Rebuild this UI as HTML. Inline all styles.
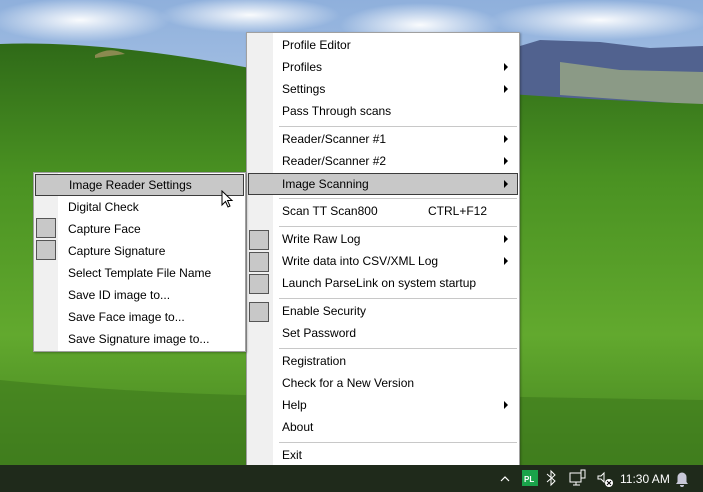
<!DOCTYPE html>
<html><head><meta charset="utf-8"><style>
*{margin:0;padding:0;box-sizing:border-box}
body{width:703px;height:492px;overflow:hidden;position:relative;font-family:"Liberation Sans",sans-serif;font-size:12px;color:#000}
.bg{position:absolute;left:0;top:0}
.menu{position:absolute;background:#fff;border:1px solid #a0a0a0;box-shadow:1px 1px 2px rgba(0,0,0,.3)}
.gut{position:absolute;left:0;top:0;bottom:0;background:#f0f0f0}
.it{position:absolute;left:0;right:0;height:22px;line-height:22px;white-space:nowrap}
.hl{background:#c8c8c8;border:1px solid #3c3c3c}
.arr{position:absolute;width:0;height:0;border-left:4px solid #000;border-top:4px solid transparent;border-bottom:4px solid transparent}
.sep{position:absolute;height:1px;background:#c8c8c8}
.cb{position:absolute;width:20px;height:20px;background:#c8c8c8;border:1px solid #555}
.tb{position:absolute;left:0;top:465px;width:703px;height:27px;background:#1f2a1b}
</style></head><body>
<svg class="bg" width="703" height="492" viewBox="0 0 703 492">
<defs>
<linearGradient id="sky" x1="0" y1="0" x2="0" y2="1"><stop offset="0" stop-color="#8fb0dc"/><stop offset=".5" stop-color="#c5d8ef"/><stop offset="1" stop-color="#e6eef8"/></linearGradient>
<linearGradient id="fld" x1="0" y1="0" x2="0" y2="1"><stop offset="0" stop-color="#2f6a18"/><stop offset=".3" stop-color="#4a9222"/><stop offset=".65" stop-color="#62a92e"/><stop offset="1" stop-color="#3d7a1c"/></linearGradient>
<radialGradient id="cl"><stop offset="0" stop-color="#fff" stop-opacity=".95"/><stop offset="1" stop-color="#fff" stop-opacity="0"/></radialGradient>
</defs>
<rect width="703" height="492" fill="url(#sky)"/>
<ellipse cx="80" cy="20" rx="90" ry="22" fill="url(#cl)"/>
<ellipse cx="250" cy="15" rx="90" ry="18" fill="url(#cl)"/>
<ellipse cx="420" cy="25" rx="80" ry="22" fill="url(#cl)"/>
<ellipse cx="600" cy="20" rx="110" ry="20" fill="url(#cl)"/>
<path d="M500 52 L540 40 L600 42 L650 48 L703 46 L703 112 L500 100Z" fill="#51628f"/>
<path d="M560 62 L620 70 L703 72 L703 105 L560 95Z" fill="#8b9a86"/>
<path d="M0 44 Q100 40 250 68 Q450 95 703 104 L703 492 L0 492Z" fill="url(#fld)"/>
<path d="M0 380 Q200 400 400 395 L703 400 L703 492 L0 492Z" fill="#3e7a1d" opacity=".6"/>
<path d="M95 55 Q110 46 125 54 L95 58Z" fill="#8a8a50"/>
</svg>

<div class="menu" style="left:246px;top:32px;width:274px;height:436px">
<div class="gut" style="width:26px"></div>
<div class="it" style="top:1px"><span style="margin-left:35px">Profile Editor</span></div>
<div class="it" style="top:23px"><span style="margin-left:35px">Profiles</span><i class="arr" style="left:257px;top:7px"></i></div>
<div class="it" style="top:45px"><span style="margin-left:35px">Settings</span><i class="arr" style="left:257px;top:7px"></i></div>
<div class="it" style="top:67px"><span style="margin-left:35px">Pass Through scans</span></div>
<div class="sep" style="left:32px;right:2px;top:93px"></div>
<div class="it" style="top:95px"><span style="margin-left:35px">Reader/Scanner #1</span><i class="arr" style="left:257px;top:7px"></i></div>
<div class="it" style="top:117px"><span style="margin-left:35px">Reader/Scanner #2</span><i class="arr" style="left:257px;top:7px"></i></div>
<div class="it hl" style="top:140px;left:1px;right:1px;height:22px;line-height:20px"><span style="margin-left:33px">Image Scanning</span><i class="arr" style="left:255px;top:6px"></i></div>
<div class="sep" style="left:32px;right:2px;top:165px"></div>
<div class="it" style="top:167px"><span style="margin-left:35px">Scan TT Scan800</span><span style="position:absolute;left:181px">CTRL+F12</span></div>
<div class="sep" style="left:32px;right:2px;top:193px"></div>
<div class="cb" style="left:2px;top:197px"></div>
<div class="cb" style="left:2px;top:219px"></div>
<div class="cb" style="left:2px;top:241px"></div>
<div class="it" style="top:195px"><span style="margin-left:35px">Write Raw Log</span><i class="arr" style="left:257px;top:7px"></i></div>
<div class="it" style="top:217px"><span style="margin-left:35px">Write data into CSV/XML Log</span><i class="arr" style="left:257px;top:7px"></i></div>
<div class="it" style="top:239px"><span style="margin-left:35px">Launch ParseLink on system startup</span></div>
<div class="sep" style="left:32px;right:2px;top:265px"></div>
<div class="cb" style="left:2px;top:269px"></div>
<div class="it" style="top:267px"><span style="margin-left:35px">Enable Security</span></div>
<div class="it" style="top:289px"><span style="margin-left:35px">Set Password</span></div>
<div class="sep" style="left:32px;right:2px;top:315px"></div>
<div class="it" style="top:317px"><span style="margin-left:35px">Registration</span></div>
<div class="it" style="top:339px"><span style="margin-left:35px">Check for a New Version</span></div>
<div class="it" style="top:361px"><span style="margin-left:35px">Help</span><i class="arr" style="left:257px;top:7px"></i></div>
<div class="it" style="top:383px"><span style="margin-left:35px">About</span></div>
<div class="sep" style="left:32px;right:2px;top:409px"></div>
<div class="it" style="top:411px"><span style="margin-left:35px">Exit</span></div>
</div>

<div class="menu" style="left:33px;top:172px;width:213px;height:180px">
<div class="gut" style="width:24px"></div>
<div class="it hl" style="top:1px;left:1px;right:1px;height:22px;line-height:20px"><span style="margin-left:33px">Image Reader Settings</span></div>
<div class="cb" style="left:2px;top:45px"></div>
<div class="cb" style="left:2px;top:67px"></div>
<div class="it" style="top:23px"><span style="margin-left:34px">Digital Check</span></div>
<div class="it" style="top:45px"><span style="margin-left:34px">Capture Face</span></div>
<div class="it" style="top:67px"><span style="margin-left:34px">Capture Signature</span></div>
<div class="it" style="top:89px"><span style="margin-left:34px">Select Template File Name</span></div>
<div class="it" style="top:111px"><span style="margin-left:34px">Save ID image to...</span></div>
<div class="it" style="top:133px"><span style="margin-left:34px">Save Face image to...</span></div>
<div class="it" style="top:155px"><span style="margin-left:34px">Save Signature image to...</span></div>
</div>

<svg style="position:absolute;left:221px;top:190px" width="14" height="20" viewBox="0 0 14 20"><path d="M1 1 L1 15 L4.5 11.5 L7 17 L9 16 L6.5 10.5 L11 10.5 Z" fill="#fff" stroke="#000" stroke-width="1"/></svg>

<div class="tb"></div>
<svg style="position:absolute;left:490px;top:465px" width="213" height="27" viewBox="0 0 213 27">
<path d="M11 16 L15 12 L19 16" fill="none" stroke="#fff" stroke-width="1.2"/>
<rect x="32" y="5" width="16" height="16" fill="#1aa34a"/>
<text x="34" y="17" font-family="Liberation Sans" font-size="8" font-weight="bold" fill="#fff">PL</text>
<path d="M57 9 L65 16 L61 20 L61 6 L65 10 L57 17" fill="none" stroke="#fff" stroke-width="1"/>
<rect x="80" y="8" width="11" height="9" fill="none" stroke="#fff"/><path d="M83 20 H90 M86 17 V20" stroke="#fff"/><rect x="91" y="5" width="4" height="8" fill="none" stroke="#fff"/>
<path d="M108 11 h3 l3 -3 v9 l-3 -3 h-3z" fill="none" stroke="#fff"/><circle cx="119" cy="18" r="4" fill="#fff"/><path d="M117 16 l4 4 M121 16 l-4 4" stroke="#000"/>
<text x="130" y="18" font-family="Liberation Sans" font-size="12" fill="#fff">11:30 AM</text>
<path d="M186 19 h12 l-1.5 -2 v-5 a4.5 4.5 0 0 0 -9 0 v5 z M190 20 h4 a2 2 0 0 1 -4 0z" fill="#c8c8d8"/>
</svg>
</body></html>
